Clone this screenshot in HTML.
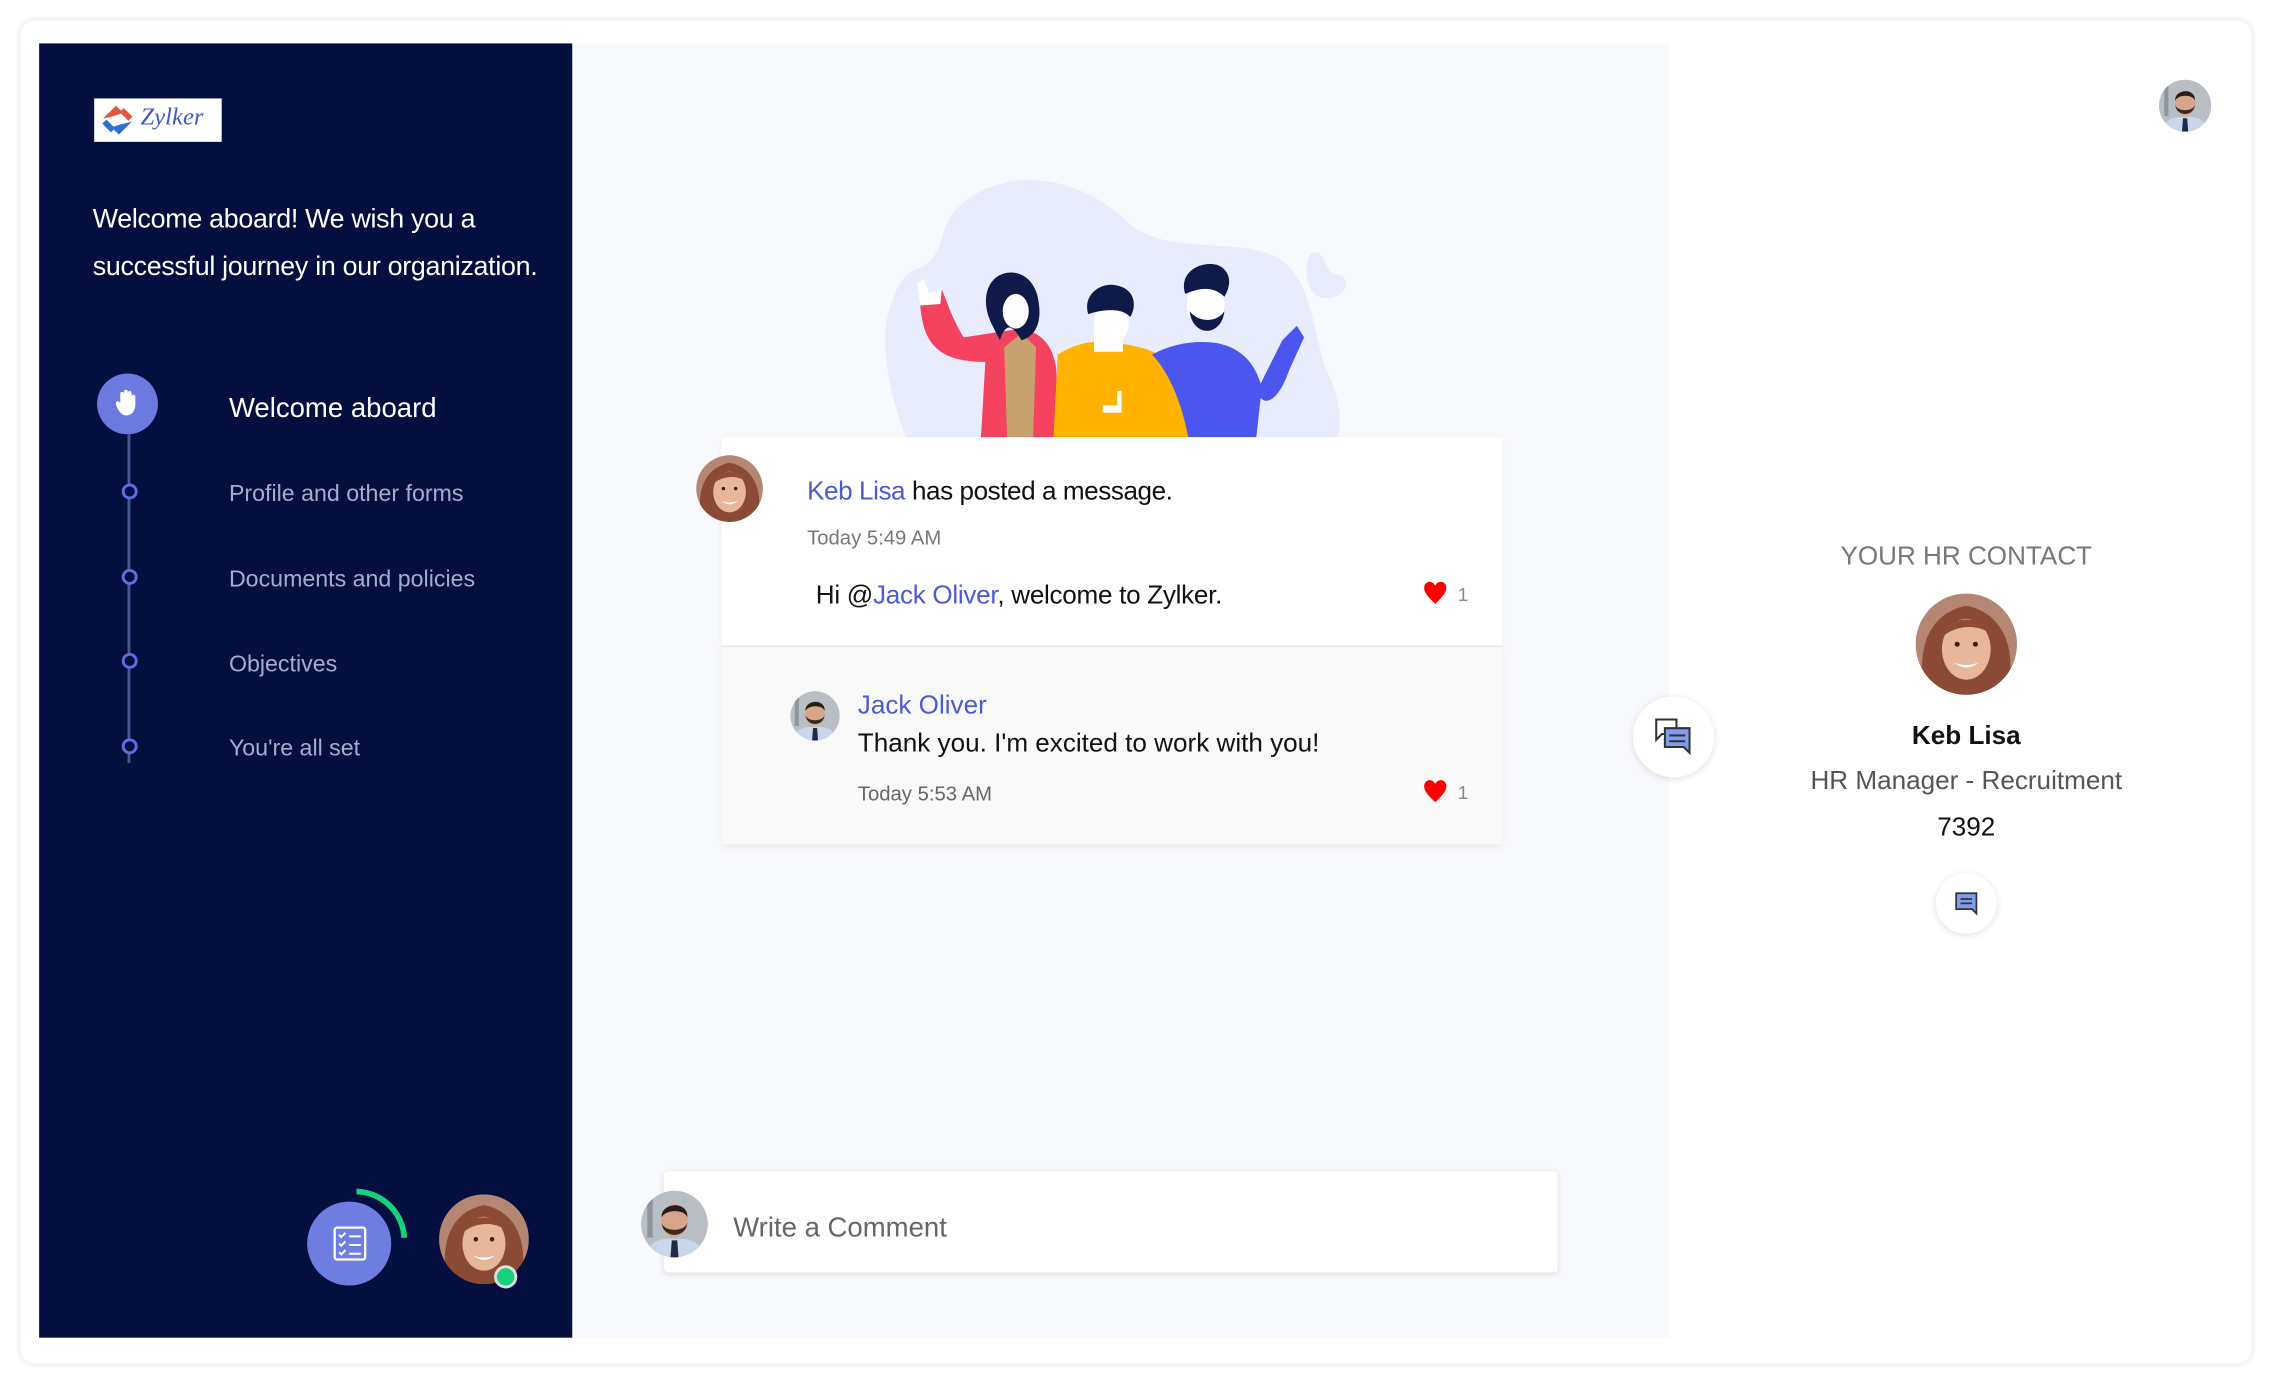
<!DOCTYPE html>
<html><head><meta charset="utf-8">
<style>
html,body{margin:0;padding:0;width:2272px;height:1384px;overflow:hidden;background:#fff;font-family:"Liberation Sans",sans-serif;}
#s{position:absolute;left:0;top:0;width:1568px;height:956px;transform:scale(1.449,1.4477);transform-origin:0 0;}
.a{position:absolute;white-space:nowrap;}
.card{position:absolute;left:14px;top:14px;width:1540px;height:928px;border-radius:10px;box-shadow:0 0 4px rgba(0,0,0,.12);background:#fff;}
.left{position:absolute;left:27px;top:30px;width:368px;height:894px;background:#040f40;}
.center{position:absolute;left:395px;top:30px;width:757px;height:894px;background:#f8f9fc;}
.st{color:#a6acd0;font-size:16px;}
.blue{color:#4a5bd4;}
.circ{position:absolute;border-radius:50%;background:#fff;box-shadow:0 1px 5px rgba(0,0,0,.12);}
</style></head><body>
<svg width="0" height="0" style="position:absolute">
<defs>
<symbol id="wom" viewBox="0 0 100 100">
<rect width="100" height="100" fill="#b58672"/>
<path d="M10 100 C0 60 10 20 50 12 C90 20 100 60 90 100Z" fill="#8a4a34"/>
<ellipse cx="50" cy="55" rx="24" ry="30" fill="#e8b79a"/>
<path d="M24 45 C28 20 72 18 78 45 C70 30 40 28 24 45Z" fill="#8e4c33"/>
<path d="M38 68 Q50 78 62 68 Q50 73 38 68Z" fill="#fff"/>
<circle cx="41" cy="50" r="2.5" fill="#3a2016"/><circle cx="59" cy="50" r="2.5" fill="#3a2016"/>
</symbol>
<symbol id="man" viewBox="0 0 100 100">
<rect width="100" height="100" fill="#b9bdc4"/>
<rect x="10" y="0" width="8" height="70" fill="#8f95a0"/>
<path d="M5 100 C10 75 30 70 50 72 C70 70 90 75 95 100Z" fill="#c9d6ec"/>
<path d="M46 74 L54 74 L56 100 L44 100Z" fill="#1d2a4a"/>
<ellipse cx="50" cy="45" rx="19" ry="24" fill="#d7a58a"/>
<path d="M31 40 C30 18 70 15 69 40 C64 28 38 28 31 40Z" fill="#2a1c16"/>
<path d="M31 48 C33 72 67 72 69 48 C66 62 34 62 31 48Z" fill="#3a2a22"/>
</symbol>
<symbol id="heart" viewBox="0 0 20 20"><path d="M10 19 C4 13 1 10 1 6 C1 3 3 1 5.5 1 C7.5 1 9 2.5 10 4 C11 2.5 12.5 1 14.5 1 C17 1 19 3 19 6 C19 10 16 13 10 19Z" fill="#f00"/></symbol>
</defs></svg>
<div id="s">
<div class="card"></div>
<div class="left"></div>
<div class="center"></div>

<!-- logo -->
<div class="a" style="left:65px;top:68px;width:88px;height:30px;background:#fff;"></div>
<svg class="a" style="left:67px;top:70px" width="28" height="26" viewBox="0 0 28 26"><path d="M4 12 L13 3 L18 8 L12 10Z" fill="#e2553f"/><path d="M24 14 L15 23 L10 18 L16 16Z" fill="#2d6fd6"/><path d="M5 14 L11 20" stroke="#2d6fd6" stroke-width="4"/><path d="M17 6 L23 12" stroke="#e2553f" stroke-width="4"/></svg>
<div class="a" style="left:97px;top:71px;font-family:'Liberation Serif',serif;font-style:italic;font-size:17px;color:#3a5cc0;">Zylker</div>

<div class="a" style="left:64px;top:134px;color:#fff;font-size:18.5px;line-height:33px;letter-spacing:-0.2px;">Welcome aboard! We wish you a<br>successful journey in our organization.</div>

<div class="a" style="left:88px;top:300px;width:1.5px;height:227px;background:#4b5690;"></div>
<div class="a" style="left:67px;top:258px;width:42px;height:42px;border-radius:50%;background:#6b7ae0;"></div>
<svg class="a" style="left:79px;top:268px" width="18" height="20" viewBox="0 0 18 20"><path d="M4 10 V4 a1.3 1.3 0 0 1 2.6 0 V9 V2.5 a1.3 1.3 0 0 1 2.6 0 V9 V3.5 a1.3 1.3 0 0 1 2.6 0 V10 V6 a1.3 1.3 0 0 1 2.6 0 V12 C14 17 11 19 8 19 C5 19 3 16 1.5 13 L1 11 a1.3 1.3 0 0 1 2.5 -1Z" fill="#fff"/></svg>
<div class="a" style="left:158px;top:272px;color:#fff;font-size:19px;">Welcome aboard</div>
<div class="a" style="left:84px;top:334px;width:7px;height:7px;border:2px solid #5c6ee0;border-radius:50%;background:#040f40;"></div>
<div class="a" style="left:84px;top:393px;width:7px;height:7px;border:2px solid #5c6ee0;border-radius:50%;background:#040f40;"></div>
<div class="a" style="left:84px;top:451px;width:7px;height:7px;border:2px solid #5c6ee0;border-radius:50%;background:#040f40;"></div>
<div class="a" style="left:84px;top:510px;width:7px;height:7px;border:2px solid #5c6ee0;border-radius:50%;background:#040f40;"></div>
<div class="a st" style="left:158px;top:333px;">Profile and other forms</div>
<div class="a st" style="left:158px;top:392px;">Documents and policies</div>
<div class="a st" style="left:158px;top:451px;">Objectives</div>
<div class="a st" style="left:158px;top:509px;">You're all set</div>

<!-- bottom left -->
<svg class="a" style="left:205px;top:815px" width="85" height="80" viewBox="0 0 85 80">
<circle cx="36" cy="44" r="29" fill="#6e7ee0"/>
<path d="M41 8 A34 34 0 0 1 74 40" fill="none" stroke="#17d07e" stroke-width="4"/>
<rect x="26" y="33" width="21" height="22" rx="1.5" fill="none" stroke="#fff" stroke-width="1.6"/>
<path d="M29 38 l1.5 1.5 3-3 M29 44 l1.5 1.5 3-3 M29 50 l1.5 1.5 3-3 M36 39 h8 M36 45 h8 M36 51 h8" stroke="#fff" stroke-width="1.4" fill="none"/>
</svg>
<svg class="a" style="left:303px;top:825px" width="62" height="62"><clipPath id="c1"><circle cx="31" cy="31" r="31"/></clipPath><use href="#wom" width="62" height="62" clip-path="url(#c1)"/></svg>
<div class="a" style="left:341px;top:874px;width:12px;height:12px;border-radius:50%;background:#17d07e;border:2px solid #ddd;"></div>

<!-- illustration -->
<svg class="a" style="left:605px;top:115px" width="330" height="188" viewBox="0 0 330 188">
<path d="M30 70 C50 60 40 40 60 25 C90 0 140 5 175 40 C200 60 240 50 270 60 C300 70 300 110 310 140 C325 170 318 187 318 187 L20 187 C10 160 0 120 10 95 C15 80 20 73 30 70Z" fill="#e9ecfd"/>
<path d="M300 60 C310 55 308 75 320 75 C330 80 320 95 305 90 C295 85 295 65 300 60Z" fill="#e9ecfd"/>
<ellipse cx="24" cy="152" rx="10" ry="6" fill="#e9ecfd"/>
<!-- red woman -->
<path d="M30 95 C32 120 40 135 75 135 L72 187 L125 187 L124 140 C122 125 115 115 100 112 L60 118 C52 105 48 92 45 85Z" fill="#f4425f"/>
<path d="M88 125 L100 115 L110 125 L108 187 L90 187Z" fill="#c6a06e"/>
<path d="M30 96 L28 80 L33 78 L36 88 L45 84 L44 95Z" fill="#fff"/>
<path d="M80 110 C72 95 75 80 85 75 C95 70 110 75 112 95 C114 110 108 118 100 120 C95 112 90 105 85 120Z" fill="#101a4a"/>
<ellipse cx="96" cy="100" rx="9" ry="12" fill="#fff"/>
<!-- yellow -->
<path d="M125 130 C140 120 155 120 165 122 C185 124 205 130 212 150 L220 187 L122 187Z" fill="#ffb300"/>
<path d="M150 110 L150 128 L170 128 L170 110Z" fill="#fff"/>
<ellipse cx="162" cy="108" rx="12" ry="15" fill="#fff"/>
<path d="M146 102 C142 88 155 80 165 82 C178 84 180 96 175 104 C170 98 158 98 146 102Z" fill="#101a4a"/>
<path d="M156 165 h10 v-10 l3 0 v15 h-13Z" fill="#fff"/>
<!-- blue -->
<path d="M190 130 C205 122 220 120 235 122 C255 126 262 140 265 150 L280 120 L290 110 L295 118 L285 140 C278 160 270 165 265 160 L262 187 L215 187 C210 160 200 140 190 130Z" fill="#4a56ee"/>
<ellipse cx="227" cy="95" rx="13" ry="17" fill="#fff"/>
<path d="M216 100 C218 118 238 118 240 100 C235 108 222 108 216 100Z" fill="#101a4a"/>
<path d="M213 88 C208 72 225 65 235 68 C245 72 245 82 240 90 C232 82 222 84 213 88Z" fill="#101a4a"/>
</svg>

<!-- card 1 -->
<div class="a" style="left:498px;top:302px;width:539px;height:144px;background:#fff;box-shadow:0 1px 3px rgba(0,0,0,.06);"></div>
<div class="a" style="left:498px;top:446px;width:539px;height:136px;background:#f9f9f9;border-top:1px solid #e6e6e6;box-shadow:0 2px 4px rgba(0,0,0,.06);"></div>
<svg class="a" style="left:480px;top:314px" width="47" height="47"><clipPath id="c2"><circle cx="23.5" cy="23.5" r="23"/></clipPath><use href="#wom" width="47" height="47" clip-path="url(#c2)"/></svg>
<div class="a" style="left:557px;top:329px;font-size:18px;color:#111;letter-spacing:-0.3px;"><span class="blue">Keb Lisa</span> has posted a message.</div>
<div class="a" style="left:557px;top:363px;font-size:14px;color:#777;">Today 5:49 AM</div>
<div class="a" style="left:563px;top:401px;font-size:18px;color:#111;letter-spacing:-0.2px;">Hi @<span class="blue">Jack Oliver</span>, welcome to Zylker.</div>
<svg class="a" style="left:982px;top:401px" width="17" height="17"><use href="#heart" width="17" height="17"/></svg>
<div class="a" style="left:1006px;top:403px;font-size:13px;color:#888;">1</div>

<svg class="a" style="left:545px;top:477px" width="35" height="35"><clipPath id="c3"><circle cx="17.5" cy="17.5" r="17"/></clipPath><use href="#man" width="35" height="35" clip-path="url(#c3)"/></svg>
<div class="a blue" style="left:592px;top:477px;font-size:18px;">Jack Oliver</div>
<div class="a" style="left:592px;top:503px;font-size:18px;color:#111;">Thank you. I'm excited to work with you!</div>
<div class="a" style="left:592px;top:540px;font-size:14px;color:#666;">Today 5:53 AM</div>
<svg class="a" style="left:982px;top:538px" width="17" height="17"><use href="#heart" width="17" height="17"/></svg>
<div class="a" style="left:1006px;top:540px;font-size:13px;color:#888;">1</div>

<!-- chat bubble -->
<div class="circ" style="left:1127px;top:481px;width:56px;height:56px;"></div>
<svg class="a" style="left:1141px;top:495px" width="28" height="28" viewBox="0 0 28 28"><path d="M2 2 h14 v10 h-10 l-4 4Z" fill="#fff" stroke="#333" stroke-width="1.4"/><path d="M8 8 h17 v12 v5 l-4-4 h-13Z" fill="#7e9cf0" stroke="#333" stroke-width="1.4"/><path d="M11 13 h11 M11 17 h11" stroke="#333" stroke-width="1.4"/></svg>

<!-- comment -->
<div class="a" style="left:458px;top:809px;width:617px;height:70px;background:#fff;box-shadow:0 1px 4px rgba(0,0,0,.12);border-radius:3px;"></div>
<svg class="a" style="left:442px;top:822px" width="47" height="47"><clipPath id="c4"><circle cx="23.5" cy="23.5" r="23"/></clipPath><use href="#man" width="47" height="47" clip-path="url(#c4)"/></svg>
<div class="a" style="left:506px;top:838px;font-size:19px;color:#666;">Write a Comment</div>

<!-- right -->
<svg class="a" style="left:1490px;top:55px" width="36" height="36"><clipPath id="c5"><circle cx="18" cy="18" r="18"/></clipPath><use href="#man" width="36" height="36" clip-path="url(#c5)"/></svg>
<div class="a" style="left:1257px;top:374px;width:200px;text-align:center;font-size:18px;color:#777;">YOUR HR CONTACT</div>
<svg class="a" style="left:1322px;top:410px" width="70" height="70"><clipPath id="c6"><circle cx="35" cy="35" r="35"/></clipPath><use href="#wom" width="70" height="70" clip-path="url(#c6)"/></svg>
<div class="a" style="left:1257px;top:498px;width:200px;text-align:center;font-size:18px;font-weight:bold;color:#111;">Keb Lisa</div>
<div class="a" style="left:1207px;top:529px;width:300px;text-align:center;font-size:18px;color:#555;">HR Manager - Recruitment</div>
<div class="a" style="left:1257px;top:561px;width:200px;text-align:center;font-size:18px;color:#111;">7392</div>
<div class="circ" style="left:1336px;top:603px;width:42px;height:42px;"></div>
<svg class="a" style="left:1348px;top:615px" width="18" height="18" viewBox="0 0 18 18"><path d="M2 2 h14 v10 v4 l-3-3 h-11Z" fill="#7e9cf0" stroke="#333" stroke-width="1.2"/><path d="M5 6 h8 M5 9 h8" stroke="#333" stroke-width="1.2"/></svg>
</div>
</body></html>
